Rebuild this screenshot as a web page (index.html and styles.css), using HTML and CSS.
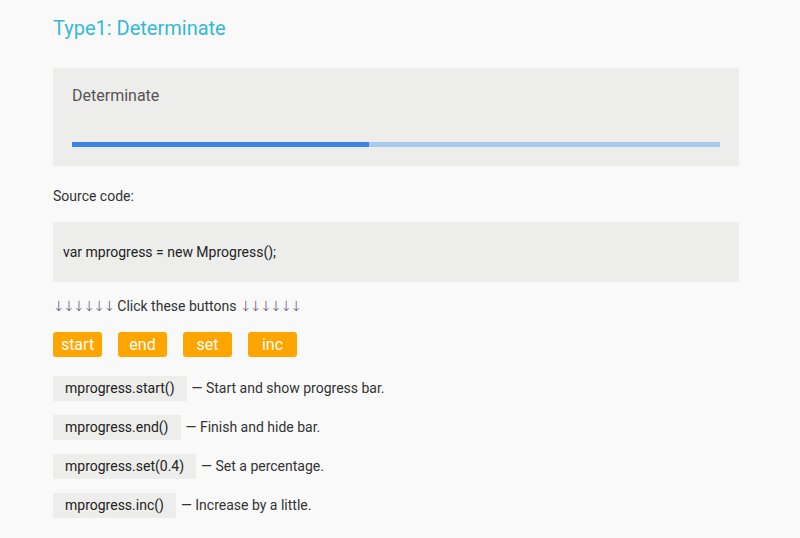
FILE: index.html
```html
<!DOCTYPE html>
<html lang="en">
<head>
<meta charset="utf-8">
<title>Mprogress Type1</title>
<link rel="stylesheet" href="styles.css">
</head>
<body>
<main class="page">
  <h2 class="title">Type1: Determinate</h2>
  <section class="demo">
    <p class="demo-label">Determinate</p>
    <div class="bar"><div class="bar-fill" style="width:45.8%"></div></div>
  </section>
  <p class="label">Source code:</p>
  <pre class="code">var mprogress = new Mprogress();</pre>
  <p class="hint"><span class="arrows">↓↓↓↓↓↓</span> Click these buttons <span class="arrows">↓↓↓↓↓↓</span></p>
  <div class="buttons">
    <button class="btn">start</button>
    <button class="btn">end</button>
    <button class="btn">set</button>
    <button class="btn">inc</button>
  </div>
  <ul class="api">
    <li class="api-row"><code class="chip">mprogress.start()</code> — Start and show progress bar.</li>
    <li class="api-row"><code class="chip">mprogress.end()</code> — Finish and hide bar.</li>
    <li class="api-row"><code class="chip">mprogress.set(0.4)</code> — Set a percentage.</li>
    <li class="api-row"><code class="chip">mprogress.inc()</code> — Increase by a little.</li>
  </ul>
</main>
</body>
</html>
```
FILE: styles.css
```css
html, body {
  margin: 0;
  padding: 0;
  background: #f9f9f9;
}
body {
  font-family: Roboto, "Liberation Sans", sans-serif;
  font-size: 14px;
  line-height: 18px;
  color: #333;
}
.page {
  width: 686px;
  padding: 16px 0 0 53px;
}
.title {
  margin: 0;
  font-size: 20px;
  line-height: 24px;
  font-weight: 400;
  color: #33b9d7;
}
.demo {
  margin-top: 28px;
  background: #ededeb;
  padding: 18px 19px 19px 19px;
}
.demo-label {
  margin: 0;
  font-size: 16px;
  line-height: 20px;
  color: #555;
}
.bar {
  margin-top: 36px;
  height: 5px;
  background: #a9c9ee;
}
.bar-fill {
  height: 100%;
  background: #3b83e6;
}
.label {
  margin: 21px 0 0;
}
.code {
  margin: 17px 0 0;
  padding: 21px 10px;
  background: #ededeb;
  font-family: Roboto, "Liberation Sans", sans-serif;
  font-size: 14px;
  line-height: 18px;
  color: #222;
}
.hint {
  margin: 15px 0 0;
}
.arrows {
  font-family: "DejaVu Sans", sans-serif;
  font-size: 14px;
  font-weight: 200;
  letter-spacing: -1.6px;
  color: #4a3f5c;
}
.buttons {
  margin-top: 17px;
  display: flex;
  gap: 16px;
}
.btn {
  width: 49px;
  height: 25px;
  padding: 0;
  border: 0;
  border-radius: 3px;
  background: #ffa500;
  color: #fff;
  font-family: Roboto, "Liberation Sans", sans-serif;
  font-size: 16px;
  line-height: 25px;
  text-align: center;
}
.api {
  list-style: none;
  margin: 19px 0 0;
  padding: 0;
  display: flex;
  flex-direction: column;
  gap: 14px;
}
.api-row {
  display: flex;
  align-items: center;
  gap: 5px;
  line-height: 25px;
}
.chip {
  display: inline-block;
  background: #ededeb;
  padding: 0 12px;
  font-family: Roboto, "Liberation Sans", sans-serif;
  font-size: 14px;
  line-height: 25px;
  color: #222;
}
```
